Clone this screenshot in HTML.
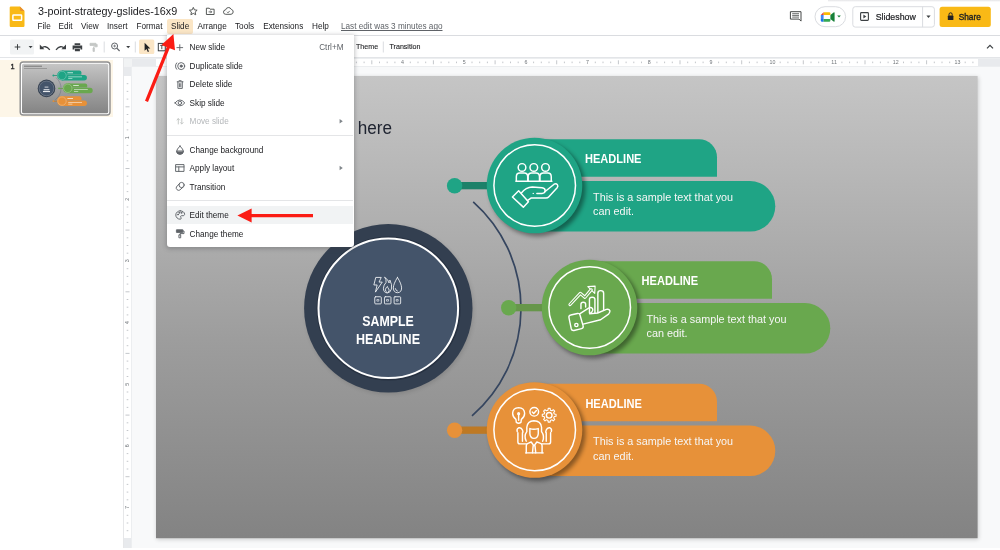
<!DOCTYPE html>
<html lang="en">
<head>
<meta charset="utf-8">
<title>3-point-strategy-gslides-16x9 - Google Slides</title>
<style>
*{box-sizing:border-box;margin:0;padding:0}
html,body{width:1000px;height:550px;overflow:hidden;background:#fff}
body{font-family:"Liberation Sans",sans-serif;color:#202124;position:relative}
#app{position:absolute;left:0;top:0;width:1000px;height:550px;overflow:hidden;will-change:transform}
.abs{position:absolute}
.t{position:absolute;white-space:nowrap;line-height:1}
svg{position:absolute;left:0;top:0;overflow:visible}
svg text{font-family:"Liberation Sans",sans-serif}
#title{left:38px;top:5px;font-size:10.8px;line-height:13px;color:#202124}
.menu{font-size:8.2px;color:#202124;top:22.4px;line-height:10px}
#slidehl{left:167px;top:19px;width:26px;height:15px;background:#fbe6c6;border-radius:2px}
#hdrline{left:0;top:35px;width:1000px;height:1px;background:#dadce0}
#tbline{left:0;top:57px;width:1000px;height:1px;background:#e3e5e8}
.tb{font-size:7.1px;color:#202124;top:43px;line-height:9px;-webkit-text-stroke:.1px #202124}
#dd{left:167px;top:35px;width:186.6px;height:211.6px;background:#fff;border-radius:0 0 3px 3px;box-shadow:0 1px 4px 1px rgba(60,64,67,.3)}
.mi{font-size:8.2px;color:#202124;left:189.6px;line-height:10px}
.mi.dis{color:#b4b7ba}
.sep{left:167px;width:186px;height:1px;background:#e4e5e7}
#canvas{left:123px;top:58px;width:877px;height:492px;background:#f8f9fa}
</style>
</head>
<body>
<div id="app">
<div class="abs" id="canvas"></div>
<svg id="slidesvg" width="1000" height="550" viewBox="0 0 1000 550">
<defs>
<linearGradient id="bg" x1="0" y1="0" x2="0" y2="1">
<stop offset="0" stop-color="#c5c5c5"/><stop offset="0.18" stop-color="#b9b9b9"/><stop offset="0.38" stop-color="#ababab"/><stop offset="0.57" stop-color="#9d9d9d"/><stop offset="0.82" stop-color="#8e8e8e"/><stop offset="1" stop-color="#838383"/>
</linearGradient>
<clipPath id="sc"><rect x="156" y="76" width="822" height="462"/></clipPath>
<filter id="sh" x="-20%" y="-20%" width="150%" height="150%"><feGaussianBlur stdDeviation="2.2"/></filter>
</defs>
<rect x="156.5" y="77" width="822" height="462.5" fill="#000" opacity=".18" filter="url(#sh)"/>
<rect x="156" y="76" width="821.6" height="462.2" fill="url(#bg)"/>
<g clip-path="url(#sc)">
<text x="174" y="107" font-size="20" font-weight="bold" fill="#222" textLength="168" lengthAdjust="spacingAndGlyphs">3 POINT STRATEGY</text>
<text x="172" y="134" font-size="17.5" fill="#1e2330" textLength="220" lengthAdjust="spacingAndGlyphs">Enter your sub headline here</text>
<!-- arc -->
<path d="M473.2,201.8 A142.5,142.5 0 0 1 472,415.8" fill="none" stroke="#35455f" stroke-width="1.7"/>
<!-- big circle -->
<circle cx="389.5" cy="310" r="84" fill="#000" opacity=".12" filter="url(#sh)"/>
<circle cx="388.3" cy="308.3" r="84.2" fill="#333f50"/>
<circle cx="388.6" cy="308.6" r="71.2" fill="none" stroke="#1d2635" stroke-width="1.6" opacity=".55"/>
<circle cx="388.3" cy="308.3" r="69.8" fill="#44546a" stroke="#fff" stroke-width="2"/>
<g transform="translate(368,270) scale(0.07273)" fill="none" stroke="#f1f3f6" stroke-width="12" stroke-linejoin="round" stroke-linecap="round">
<path d="M112,102 H182 L152,166 H196 L102,304 L126,206 H86 Z"/>
<path d="M232,102 Q285,135 288,178 Q306,162 300,138 Q336,200 322,262 Q305,318 262,315 Q212,310 212,250 Q215,205 248,172 Q256,132 232,102 Z"/>
<path d="M262,312 Q236,298 240,266 Q246,240 268,226 Q270,250 286,260 Q300,282 282,302"/>
<path d="M405,102 Q350,190 348,246 Q350,310 405,312 Q462,310 462,246 Q460,190 405,102 Z"/>
<path d="M376,256 Q381,284 405,290"/>
<rect x="93" y="368" width="90" height="98" rx="12"/><rect x="226" y="368" width="90" height="98" rx="12"/><rect x="359" y="368" width="90" height="98" rx="12"/>
<rect x="127" y="406" width="22" height="22" stroke-width="9"/><rect x="260" y="406" width="22" height="22" stroke-width="9"/><rect x="393" y="406" width="22" height="22" stroke-width="9"/>
</g>
<text x="388" y="325.5" font-size="14.5" font-weight="bold" fill="#fff" text-anchor="middle" textLength="51.5" lengthAdjust="spacingAndGlyphs">SAMPLE</text>
<text x="388" y="343.5" font-size="14.5" font-weight="bold" fill="#fff" text-anchor="middle" textLength="64" lengthAdjust="spacingAndGlyphs">HEADLINE</text>
<g transform="translate(0,0)">
<rect x="455" y="182" width="40" height="7.3" fill="#1c8169"/>
<circle cx="454.6" cy="185.8" r="7.7" fill="#1fa485"/>
<path d="M534,139.2 H699 a18,18 0 0 1 18,18 V176.7 H534 Z" fill="#1fa485"/>
<path d="M534,181 H750 a25.3,25.3 0 0 1 0,50.6 H534 Z" fill="#1fa485"/>
<circle cx="537.5" cy="188.5" r="48" fill="#000" opacity=".4" filter="url(#sh)"/>
<circle cx="534.5" cy="185.5" r="47.8" fill="#1fa485"/>
<circle cx="534.7" cy="185.5" r="40.8" fill="none" stroke="#fff" stroke-width="1.5"/>
<g transform="translate(505,155) scale(0.10909)" fill="none" stroke="#fff" stroke-width="13.5" stroke-linecap="round" stroke-linejoin="round">
<circle cx="156" cy="114" r="35"/><circle cx="264" cy="114" r="35"/><circle cx="371" cy="114" r="35"/>
<path d="M104,238 V200 Q104,166 136,166 H176 Q208,166 208,200 V238"/>
<path d="M212,238 V200 Q212,166 244,166 H284 Q316,166 316,200 V238"/>
<path d="M320,238 V200 Q320,166 352,166 H392 Q424,166 424,200 V238"/>
<path d="M100,240 H430"/>
<path d="M68,385 L125,328 L215,428 L168,478 Z"/>
<path d="M150,348 Q190,296 250,293 L340,300 Q370,303 368,328 Q365,352 340,352 L292,352"/>
<path d="M368,335 L450,268 Q468,256 480,272 Q490,286 478,300 L400,385 Q392,395 375,395 L238,395 L205,418"/>
<circle cx="258" cy="352" r="3" fill="#fff" stroke-width="6"/>
</g>
<text x="585" y="163" font-size="12.6" font-weight="bold" fill="#fff" textLength="56.5" lengthAdjust="spacingAndGlyphs">HEADLINE</text>
<text x="593.1" y="200.8" font-size="10.8" fill="#f6f6f6" textLength="140" lengthAdjust="spacingAndGlyphs">This is a sample text that you</text>
<text x="593.1" y="215.4" font-size="10.8" fill="#f6f6f6" textLength="41" lengthAdjust="spacingAndGlyphs">can edit.</text>
</g>
<g transform="translate(55,122)">
<rect x="455" y="182" width="40" height="7.3" fill="#66964a"/>
<circle cx="453.70000000000005" cy="185.8" r="7.7" fill="#69a84e"/>
<path d="M534,139.2 H699 a18,18 0 0 1 18,18 V176.7 H534 Z" fill="#69a84e"/>
<path d="M534,181 H750 a25.3,25.3 0 0 1 0,50.6 H534 Z" fill="#69a84e"/>
<circle cx="537.5" cy="188.5" r="48" fill="#000" opacity=".4" filter="url(#sh)"/>
<circle cx="534.5" cy="185.5" r="47.8" fill="#69a84e"/>
<circle cx="534.7" cy="185.5" r="40.8" fill="none" stroke="#fff" stroke-width="1.5"/>
<g transform="translate(505,155) scale(0.10909)" fill="none" stroke="#fff" stroke-width="13" stroke-linecap="round" stroke-linejoin="round">
<path d="M92,252 L187,150 L228,186 L285,118" stroke-width="30"/>
<path d="M255,88 L322,84 L318,150 Z" stroke-width="10" fill="none"/>
<path d="M92,252 L187,150 L228,186 L285,118" stroke="#69a84e" stroke-width="10"/>
<path d="M192,290 V250 Q192,232 213,232 Q235,232 235,250 V275"/>
<path d="M270,330 V205 Q270,185 295,185 Q320,185 320,205 V330"/>
<path d="M347,325 V148 Q347,125 373,125 Q400,125 400,148 V305"/>
<path d="M82,372 Q78,352 98,348 L160,334 Q178,330 184,350 L212,448 Q217,468 198,473 L128,490 Q108,494 103,474 Z"/>
<circle cx="150" cy="440" r="15"/>
<path d="M180,338 L262,285 Q285,272 298,290 Q308,305 292,320 L272,338 L345,330 L425,297 Q448,290 457,308 Q463,325 445,340 L372,392 L212,432"/>
</g>
<text x="586.6" y="163" font-size="12.6" font-weight="bold" fill="#fff" textLength="56.5" lengthAdjust="spacingAndGlyphs">HEADLINE</text>
<text x="591.5" y="200.8" font-size="10.8" fill="#f6f6f6" textLength="140" lengthAdjust="spacingAndGlyphs">This is a sample text that you</text>
<text x="591.5" y="215.4" font-size="10.8" fill="#f6f6f6" textLength="41" lengthAdjust="spacingAndGlyphs">can edit.</text>
</g>
<g transform="translate(0,244.5)">
<rect x="455" y="182" width="40" height="7.3" fill="#be7924"/>
<circle cx="454.6" cy="185.8" r="7.7" fill="#e79139"/>
<path d="M534,139.2 H699 a18,18 0 0 1 18,18 V176.7 H534 Z" fill="#e79139"/>
<path d="M534,181 H750 a25.3,25.3 0 0 1 0,50.6 H534 Z" fill="#e79139"/>
<circle cx="537.5" cy="188.5" r="48" fill="#000" opacity=".4" filter="url(#sh)"/>
<circle cx="534.5" cy="185.5" r="47.8" fill="#e79139"/>
<circle cx="534.7" cy="185.5" r="40.8" fill="none" stroke="#fff" stroke-width="1.5"/>
<g transform="translate(505,155.5) scale(0.10909)" fill="none" stroke="#fff" stroke-width="13" stroke-linecap="round" stroke-linejoin="round">
<path d="M100,178 Q70,155 70,122 Q72,72 125,70 Q178,72 180,122 Q180,155 150,178 L146,205 Q125,222 104,205 Z"/>
<circle cx="125" cy="125" r="8"/><path d="M125,135 V185"/>
<circle cx="268" cy="108" r="40"/><path d="M250,110 L263,123 L288,96"/>
<circle cx="405" cy="140" r="26"/>
<path d="M452,129 L468,131 L468,149 L452,151 L446,165 L456,178 L443,191 L430,181 L416,187 L414,203 L396,203 L394,187 L380,181 L367,191 L354,178 L364,165 L358,151 L342,149 L342,131 L358,129 L364,115 L354,102 L367,89 L380,99 L394,93 L396,77 L414,77 L416,93 L430,99 L443,89 L456,102 L446,115 Z" stroke-width="10"/>
<path d="M195,378 Q170,330 200,290 V250 Q205,192 265,190 Q330,192 335,250 V290 Q365,330 345,378"/>
<path d="M228,262 Q262,275 305,262 V310 Q300,350 266,352 Q232,350 228,310 Z"/>
<path d="M195,485 V420 Q195,400 215,395 L240,385 L266,420 L292,385 L320,395 Q340,400 340,420 V485"/>
<path d="M190,485 H350"/>
<path d="M258,420 L252,485 M275,420 L282,485"/>
<path d="M195,402 H135 Q118,402 118,385 V300"/>
<path d="M160,378 V300"/>
<path d="M112,290 Q105,262 125,255 Q150,250 160,275 L165,295"/>
<path d="M340,402 H400 Q418,402 418,385 V300"/>
<path d="M378,378 V300"/>
<path d="M425,290 Q432,262 412,255 Q388,250 378,275 L373,295"/>
</g>
<text x="585.4" y="163" font-size="12.6" font-weight="bold" fill="#fff" textLength="56.5" lengthAdjust="spacingAndGlyphs">HEADLINE</text>
<text x="593.1" y="200.8" font-size="10.8" fill="#f6f6f6" textLength="140" lengthAdjust="spacingAndGlyphs">This is a sample text that you</text>
<text x="593.1" y="215.4" font-size="10.8" fill="#f6f6f6" textLength="41" lengthAdjust="spacingAndGlyphs">can edit.</text>
</g>
</g>
</svg>
<svg width="1000" height="550" viewBox="0 0 1000 550">
<rect x="131.5" y="58" width="868.5" height="8.5" fill="#fff"/>
<rect x="131.5" y="58" width="24.5" height="8.5" fill="#e8eaed"/>
<rect x="978" y="58" width="22" height="8.5" fill="#e8eaed"/>
<rect x="123.5" y="58" width="8" height="8.5" fill="#f1f3f4"/>
<path d="M123.5,58.5 H1000 M131.5,66.5 H1000" stroke="#eceef0" stroke-width="1" fill="none"/>
<rect x="123.5" y="66.5" width="8" height="483.5" fill="#fff"/>
<rect x="123.5" y="66.5" width="8" height="9.5" fill="#e8eaed"/>
<rect x="123.5" y="538" width="8" height="12" fill="#e8eaed"/>
<path d="M123.5,58 V550 M131.5,66.5 V550" stroke="#eceef0" stroke-width="1" fill="none"/>
<path d="M163.7,61.6 v1.6 M171.4,61.6 v1.6 M179.1,61.6 v1.6 M186.8,60.3 v4 M194.5,61.6 v1.6 M202.2,61.6 v1.6 M209.9,61.6 v1.6 M225.4,61.6 v1.6 M233.1,61.6 v1.6 M240.8,61.6 v1.6 M248.5,60.3 v4 M256.2,61.6 v1.6 M263.9,61.6 v1.6 M271.6,61.6 v1.6 M287.0,61.6 v1.6 M294.7,61.6 v1.6 M302.4,61.6 v1.6 M310.1,60.3 v4 M317.8,61.6 v1.6 M325.5,61.6 v1.6 M333.2,61.6 v1.6 M348.7,61.6 v1.6 M356.4,61.6 v1.6 M364.1,61.6 v1.6 M371.8,60.3 v4 M379.5,61.6 v1.6 M387.2,61.6 v1.6 M394.9,61.6 v1.6 M410.3,61.6 v1.6 M418.0,61.6 v1.6 M425.7,61.6 v1.6 M433.4,60.3 v4 M441.1,61.6 v1.6 M448.8,61.6 v1.6 M456.5,61.6 v1.6 M472.0,61.6 v1.6 M479.7,61.6 v1.6 M487.4,61.6 v1.6 M495.1,60.3 v4 M502.8,61.6 v1.6 M510.5,61.6 v1.6 M518.2,61.6 v1.6 M533.6,61.6 v1.6 M541.3,61.6 v1.6 M549.0,61.6 v1.6 M556.7,60.3 v4 M564.4,61.6 v1.6 M572.1,61.6 v1.6 M579.8,61.6 v1.6 M595.3,61.6 v1.6 M603.0,61.6 v1.6 M610.7,61.6 v1.6 M618.4,60.3 v4 M626.1,61.6 v1.6 M633.8,61.6 v1.6 M641.5,61.6 v1.6 M656.9,61.6 v1.6 M664.6,61.6 v1.6 M672.3,61.6 v1.6 M680.0,60.3 v4 M687.7,61.6 v1.6 M695.4,61.6 v1.6 M703.1,61.6 v1.6 M718.6,61.6 v1.6 M726.3,61.6 v1.6 M734.0,61.6 v1.6 M741.7,60.3 v4 M749.4,61.6 v1.6 M757.1,61.6 v1.6 M764.8,61.6 v1.6 M780.2,61.6 v1.6 M787.9,61.6 v1.6 M795.6,61.6 v1.6 M803.3,60.3 v4 M811.0,61.6 v1.6 M818.7,61.6 v1.6 M826.4,61.6 v1.6 M841.9,61.6 v1.6 M849.6,61.6 v1.6 M857.3,61.6 v1.6 M865.0,60.3 v4 M872.7,61.6 v1.6 M880.4,61.6 v1.6 M888.1,61.6 v1.6 M903.5,61.6 v1.6 M911.2,61.6 v1.6 M918.9,61.6 v1.6 M926.6,60.3 v4 M934.3,61.6 v1.6 M942.0,61.6 v1.6 M949.7,61.6 v1.6 M965.2,61.6 v1.6 M972.9,61.6 v1.6 M126.7,83.7 h1.6 M126.7,91.4 h1.6 M126.7,99.1 h1.6 M125.5,106.8 h4 M126.7,114.5 h1.6 M126.7,122.2 h1.6 M126.7,129.9 h1.6 M126.7,145.4 h1.6 M126.7,153.1 h1.6 M126.7,160.8 h1.6 M125.5,168.5 h4 M126.7,176.2 h1.6 M126.7,183.9 h1.6 M126.7,191.6 h1.6 M126.7,207.0 h1.6 M126.7,214.7 h1.6 M126.7,222.4 h1.6 M125.5,230.1 h4 M126.7,237.8 h1.6 M126.7,245.5 h1.6 M126.7,253.2 h1.6 M126.7,268.7 h1.6 M126.7,276.4 h1.6 M126.7,284.1 h1.6 M125.5,291.8 h4 M126.7,299.5 h1.6 M126.7,307.2 h1.6 M126.7,314.9 h1.6 M126.7,330.3 h1.6 M126.7,338.0 h1.6 M126.7,345.7 h1.6 M125.5,353.4 h4 M126.7,361.1 h1.6 M126.7,368.8 h1.6 M126.7,376.5 h1.6 M126.7,392.0 h1.6 M126.7,399.7 h1.6 M126.7,407.4 h1.6 M125.5,415.1 h4 M126.7,422.8 h1.6 M126.7,430.5 h1.6 M126.7,438.2 h1.6 M126.7,453.6 h1.6 M126.7,461.3 h1.6 M126.7,469.0 h1.6 M125.5,476.7 h4 M126.7,484.4 h1.6 M126.7,492.1 h1.6 M126.7,499.8 h1.6 M126.7,515.3 h1.6 M126.7,523.0 h1.6 M126.7,530.7 h1.6" stroke="#b5b9be" stroke-width="0.8" fill="none"/>
<g font-size="5.3" fill="#70757a" text-anchor="middle">
<text x="217.7" y="64.4">1</text>
<text x="279.3" y="64.4">2</text>
<text x="340.9" y="64.4">3</text>
<text x="402.6" y="64.4">4</text>
<text x="464.2" y="64.4">5</text>
<text x="525.9" y="64.4">6</text>
<text x="587.5" y="64.4">7</text>
<text x="649.2" y="64.4">8</text>
<text x="710.9" y="64.4">9</text>
<text x="772.5" y="64.4">10</text>
<text x="834.1" y="64.4">11</text>
<text x="895.8" y="64.4">12</text>
<text x="957.4" y="64.4">13</text>
<text transform="translate(129.4,137.7) rotate(-90)">1</text>
<text transform="translate(129.4,199.3) rotate(-90)">2</text>
<text transform="translate(129.4,260.9) rotate(-90)">3</text>
<text transform="translate(129.4,322.6) rotate(-90)">4</text>
<text transform="translate(129.4,384.2) rotate(-90)">5</text>
<text transform="translate(129.4,445.9) rotate(-90)">6</text>
<text transform="translate(129.4,507.6) rotate(-90)">7</text>
</g></svg>
<!-- thumbnail panel -->
<div class="abs" style="left:0;top:58px;width:123px;height:492px;background:#fff"></div>
<div class="abs" style="left:123px;top:58px;width:1px;height:492px;background:#e6e7e9"></div>
<div class="abs" style="left:0;top:59.5px;width:112.5px;height:57.5px;background:#fdf6e8"></div>
<div class="t" style="left:10.6px;top:62.6px;font-size:7.4px;color:#202124;-webkit-text-stroke:.3px #202124;line-height:8px">1</div>
<svg width="1000" height="550" viewBox="0 0 1000 550">
<defs><linearGradient id="tg" x1="0" y1="0" x2="0" y2="1"><stop offset="0" stop-color="#c5c5c5"/><stop offset="0.5" stop-color="#a2a2a2"/><stop offset="1" stop-color="#848484"/></linearGradient></defs>
<rect x="20.2" y="62" width="89.8" height="53" rx="3" fill="#fff" stroke="#8e8e8e" stroke-width="1.4"/>
<rect x="22" y="63.8" width="86.2" height="49.4" rx="1.5" fill="url(#tg)"/>
<g id="thumbshapes">
<rect x="24" y="65.7" width="18" height="1" fill="#555" opacity=".7"/><rect x="24" y="68.2" width="23" height=".7" fill="#666" opacity=".6"/>
<path d="M56,77.6 A14,14 0 0 1 55.3,99.7" fill="none" stroke="#5a6577" stroke-width=".4"/>
<circle cx="46.5" cy="88.4" r="8.8" fill="#333f50"/><circle cx="46.5" cy="88.4" r="7.4" fill="#44546a" stroke="#cfd3da" stroke-width=".3"/>
<rect x="44.6" y="86.6" width="3.8" height="1" fill="#cfd3da"/><rect x="43.6" y="89.2" width="5.8" height="1.1" fill="#e8eaee"/><rect x="43" y="91" width="7" height="1.1" fill="#e8eaee"/>
<g fill="#1fa485"><rect x="52.8" y="75.2" width="5" height=".7" fill="#1c8169"/><circle cx="53.4" cy="75.5" r=".9"/><path d="M62,70.6 h17.4 a2,2 0 0 1 2,2 v2.1 h-19.4z"/><path d="M62,75 h22.2 a2.7,2.7 0 0 1 0,5.4 h-22.2z"/><circle cx="62" cy="75.5" r="5"/></g>
<g fill="#69a84e"><rect x="58.6" y="88" width="5" height=".7" fill="#66964a"/><circle cx="59.1" cy="88.3" r=".9"/><path d="M67.8,83.4 h17.4 a2,2 0 0 1 2,2 v2.1 h-19.4z"/><path d="M67.8,87.8 h22.2 a2.7,2.7 0 0 1 0,5.4 h-22.2z"/><circle cx="67.8" cy="88.3" r="5"/></g>
<g fill="#e79139"><rect x="52.8" y="100.8" width="5" height=".7" fill="#be7924"/><circle cx="53.4" cy="101.1" r=".9"/><path d="M62,96.2 h17.4 a2,2 0 0 1 2,2 v2.1 h-19.4z"/><path d="M62,100.6 h22.2 a2.7,2.7 0 0 1 0,5.4 h-22.2z"/><circle cx="62" cy="101.1" r="5"/></g>
<g fill="none" stroke="#fff" stroke-width=".3" opacity=".85"><circle cx="62" cy="75.5" r="4.2"/><circle cx="67.8" cy="88.3" r="4.2"/><circle cx="62" cy="101.1" r="4.2"/></g>
<g fill="#fff" opacity=".85"><rect x="67.4" y="72.4" width="5.6" height=".8"/><rect x="68.2" y="76.6" width="13.8" height=".6"/><rect x="68.2" y="78.2" width="4.2" height=".6"/>
<rect x="73.2" y="85.2" width="5.6" height=".8"/><rect x="74" y="89.4" width="13.8" height=".6"/><rect x="74" y="91" width="4.2" height=".6"/>
<rect x="67.4" y="98" width="5.6" height=".8"/><rect x="68.2" y="102.2" width="13.8" height=".6"/><rect x="68.2" y="103.8" width="4.2" height=".6"/></g>
</g>
</svg>

<div class="abs" style="left:123px;top:548px;width:877px;height:2px;background:#fff"></div>
<!-- header -->
<div class="abs" style="left:0;top:0;width:1000px;height:35px;background:#fff"></div>
<div class="abs" style="left:0;top:36px;width:1000px;height:21px;background:#fff"></div>
<div class="abs" style="left:828px;top:0;width:172px;height:2px;background:linear-gradient(#e4e4e6,#fff)"></div>
<svg width="1000" height="60" viewBox="0 0 1000 60">
<!-- slides logo -->
<path d="M10.900,6.400 H19.900 L24.500,11 V25.800 a1.200,1.200 0 0 1 -1.200,1.200 H10.900 a1.200,1.200 0 0 1 -1.200,-1.200 V7.600 a1.200,1.200 0 0 1 1.200,-1.200z" fill="#f9b916"/>
<path d="M19.900,6.400 L24.500,11 H21.100 a1.200,1.200 0 0 1 -1.200,-1.200z" fill="#e8912d"/>
<rect x="12.900" y="14.900" width="8.700" height="5.400" rx=".6" fill="none" stroke="#fff" stroke-width="1.500"/>
<!-- star -->
<path d="M193.3,7.4 l1.15,2.5 2.7,.3 -2,1.85 .55,2.7 -2.4,-1.35 -2.4,1.35 .55,-2.7 -2,-1.85 2.7,-.3z" fill="none" stroke="#444746" stroke-width=".9" stroke-linejoin="round"/>
<!-- move folder -->
<path d="M206.4,8.2 h2.8 l.9,1 h4 v5.3 h-7.7z" fill="none" stroke="#444746" stroke-width=".9" stroke-linejoin="round"/>
<path d="M208.6,11.9 h3 m-1.2,-1.3 l1.3,1.3 -1.3,1.3" fill="none" stroke="#444746" stroke-width=".8"/>
<!-- cloud -->
<path d="M225.8,14.3 a2.2,2.2 0 0 1 -.2,-4.4 a3,3 0 0 1 5.7,-.5 a2.5,2.5 0 0 1 -.3,4.9z" fill="none" stroke="#444746" stroke-width=".9" stroke-linejoin="round"/>
<path d="M227,11.8 l1,1 1.7,-1.9" fill="none" stroke="#444746" stroke-width=".8"/>
<!-- comment icon -->
<path d="M790.4,11.7 h10.6 v9.4 l-2,-2 h-8.6z" fill="none" stroke="#444746" stroke-width="1" stroke-linejoin="round"/>
<path d="M792.2,13.7 h6.8 M792.2,15.4 h6.8 M792.2,17.1 h6.8" stroke="#444746" stroke-width=".8"/>
<!-- meet pill -->
<rect x="815" y="6.7" width="30.6" height="20" rx="10" fill="#fff" stroke="#dadce0" stroke-width="1"/>
<rect x="820.8" y="12.2" width="9.6" height="9.6" rx="1" fill="#fff"/>
<path d="M823.6,12.2 h5.6 a1.2,1.2 0 0 1 1.2,1.2 v1.6 h-6.8z" fill="#fbbc04"/>
<path d="M820.8,15 l2.8,-2.8 v2.8z" fill="#ea4335"/>
<path d="M820.8,15 h2.8 v4 h-2.8z" fill="#4285f4"/>
<path d="M820.8,19 h2.8 v2.8 h-1.6 a1.2,1.2 0 0 1 -1.2,-1.2z" fill="#1a73e8"/>
<path d="M823.6,19 h6.8 v1.6 a1.2,1.2 0 0 1 -1.2,1.2 h-5.6z" fill="#34a853"/>
<path d="M830.4,15 l3.2,-2.6 a.6,.6 0 0 1 1,.4 v8.4 a.6,.6 0 0 1 -1,.4 l-3.2,-2.6z" fill="#188038"/>
<path d="M837.2,15.6 h3.6 l-1.8,2z" fill="#188038"/>
<!-- slideshow -->
<rect x="852.8" y="6.7" width="81.6" height="20.4" rx="2.5" fill="#fff" stroke="#dadce0" stroke-width="1"/>
<path d="M922.6,6.7 v20.4" stroke="#dadce0" stroke-width="1"/>
<rect x="860.6" y="12.6" width="7.8" height="7.8" rx=".8" fill="none" stroke="#3c4043" stroke-width="1.1"/>
<path d="M863.4,14.6 v3.8 l2.9,-1.9z" fill="#3c4043"/>
<path d="M926.4,15.6 h4.2 l-2.1,2.3z" fill="#3c4043"/>
<!-- share -->
<rect x="939.6" y="6.7" width="51.2" height="20.2" rx="2.5" fill="#f9b916"/>
<rect x="947.8" y="15.6" width="5.6" height="4.4" rx=".6" fill="#202124"/>
<path d="M949,15.6 v-1.2 a1.6,1.6 0 0 1 3.2,0 v1.2" fill="none" stroke="#202124" stroke-width="1"/>
<!-- toolbar icons -->
<rect x="10" y="39.4" width="24" height="15.2" rx="1.5" fill="#f1f3f4"/>
<path d="M17.5,44.2 v5.6 M14.7,47 h5.6" stroke="#3c4043" stroke-width="1"/>
<path d="M28.6,46 h4 l-2,2.300z" fill="#3c4043"/>
<path d="M41.200,48.400 q4,-4 8.600,1.400" fill="none" stroke="#3c4043" stroke-width="1.300"/><path d="M39.800,44.600 v4.600 h4.600z" fill="#3c4043"/>
<path d="M64.600,48.400 q-4,-4 -8.600,1.400" fill="none" stroke="#3c4043" stroke-width="1.300"/><path d="M66,44.600 v4.600 h-4.600z" fill="#3c4043"/>
<path d="M74.6,43.2 h5.600 v1.800 h-5.600z M72.600,45.600 h9.600 v4 h-1.800 v-1.600 h-6 v1.600 h-1.800z M74.900,48.600 h5 v2.600 h-5z" fill="#3c4043"/>
<path d="M90,43.300 h6 v2.200 h-6z M96,44.400 h1.200 v2.400 h-3.600 v1.200 M93,48 h1.400 v3.400 h-1.400z" fill="#c4c7c5" stroke="#c4c7c5" stroke-width=".8"/>
<path d="M104.200,41.500 v11" stroke="#dadce0" stroke-width="1"/>
<circle cx="114.600" cy="46" r="3" fill="none" stroke="#5f6368" stroke-width="1"/><path d="M116.800,48.200 l2.800,2.800" stroke="#5f6368" stroke-width="1.200"/><path d="M113.200,46 h2.800 M114.600,44.600 v2.800" stroke="#5f6368" stroke-width=".7"/>
<path d="M126.200,46 h4 l-2,2.300z" fill="#3c4043"/>
<path d="M135.300,41.500 v11" stroke="#dadce0" stroke-width="1"/>
<rect x="139" y="39.500" width="15.300" height="14.600" rx="1.500" fill="#fbe6c6"/>
<path d="M144.600,42.800 v8 l1.900,-1.800 1.300,2.900 1.200,-.5 -1.300,-2.800 h2.600z" fill="#202124"/>
<rect x="158.300" y="43.400" width="7" height="7.400" fill="none" stroke="#3c4043" stroke-width="1"/>
<path d="M160.200,45.400 h3.200 M161.800,45.400 v3.800" stroke="#3c4043" stroke-width=".9"/>
<path d="M383.300,41.500 v11" stroke="#dadce0" stroke-width="1"/>
<path d="M987,48.400 l3,-3 3,3" fill="none" stroke="#3c4043" stroke-width="1.200"/>
</svg>
<div class="t" id="title">3-point-strategy-gslides-16x9</div>
<div class="abs" id="slidehl"></div>
<div class="t menu" style="left:37.5px">File</div>
<div class="t menu" style="left:58.5px">Edit</div>
<div class="t menu" style="left:81px">View</div>
<div class="t menu" style="left:107px">Insert</div>
<div class="t menu" style="left:136.5px">Format</div>
<div class="t menu" style="left:171px">Slide</div>
<div class="t menu" style="left:197.6px">Arrange</div>
<div class="t menu" style="left:235px">Tools</div>
<div class="t menu" style="left:263.2px">Extensions</div>
<div class="t menu" style="left:312px">Help</div>
<div class="t menu" style="left:341px;color:#5f6368;text-decoration:underline">Last edit was 3 minutes ago</div>
<div class="t" style="left:875.7px;top:11.5px;font-size:8.8px;line-height:10px;color:#202124;-webkit-text-stroke:.2px #202124">Slideshow</div>
<div class="t" style="left:958.7px;top:11.8px;font-size:8.3px;line-height:10px;color:#202124;-webkit-text-stroke:.35px #202124">Share</div>
<div class="abs" id="hdrline"></div>
<div class="abs" id="tbline"></div>
<div class="t tb" style="left:356px">Theme</div>
<div class="t tb" style="left:389.5px">Transition</div>
<!-- dropdown -->
<div class="abs" id="dd"></div>
<div class="t mi" style="top:43.0px">New slide</div>
<div class="t mi" style="top:61.6px">Duplicate slide</div>
<div class="t mi" style="top:80.1px">Delete slide</div>
<div class="t mi" style="top:98.7px">Skip slide</div>
<div class="t mi dis" style="top:117.2px">Move slide</div>
<div class="abs sep" style="top:135px"></div>
<div class="t mi" style="top:145.6px">Change background</div>
<div class="t mi" style="top:164.1px">Apply layout</div>
<div class="t mi" style="top:182.6px">Transition</div>
<div class="abs sep" style="top:200px"></div>
<div class="abs" style="left:167px;top:205.6px;width:186px;height:18.6px;background:#f1f3f4"></div>
<div class="t mi" style="top:211.0px">Edit theme</div>
<div class="t mi" style="top:229.5px">Change theme</div>
<div class="t mi" style="left:319.2px;top:43px;color:#5f6368">Ctrl+M</div>
<svg width="1000" height="550" viewBox="0 0 1000 550">
<g fill="none" stroke="#5f6368" stroke-width=".95" stroke-linecap="round" stroke-linejoin="round">
<!-- plus -->
<path d="M179.800,44.700 v5.800 M176.900,47.600 h5.800" stroke-width=".9"/>
<!-- duplicate -->
<circle cx="181.200" cy="66.100" r="3.500"/><circle cx="181.200" cy="66.100" r="1.100" fill="#5f6368"/><path d="M176.700,62.900 a4.600,4.600 0 0 0 0,6.400"/>
<!-- delete -->
<path d="M177.200,81.800 h5.800 M177.900,81.800 v6.600 h4.400 v-6.600 M179.100,80.700 h2 M179.400,83.600 v3.200 M180.800,83.600 v3.200"/>
<!-- skip (eye) -->
<path d="M175,102.900 q4.900,-6 9.800,0 q-4.900,6 -9.800,0z"/><circle cx="179.900" cy="102.900" r="1.700"/>
<!-- move -->
<path d="M178.300,124 v-5.400 l-1.300,1.400 M178.300,118.600 l1.300,1.400 M181.800,118.600 v5.400 l-1.300,-1.400 M181.800,124 l1.300,-1.400" stroke="#c4c7c5"/>
<!-- change background -->
<path d="M180,146 q-3.400,3.600 -3.400,5.200 a3.400,3 0 0 0 6.800,0 q0,-1.600 -3.400,-5.200z"/><path d="M176.700,151.400 a3.300,2.800 0 0 0 6.600,0z" fill="#5f6368"/>
<!-- apply layout -->
<rect x="176" y="164.600" width="8" height="6.800"/><path d="M176,166.900 h8 M178.800,166.900 v4.500"/>
<!-- transition -->
<circle cx="181.600" cy="185" r="2.600"/><path d="M179.400,183.600 l-3,3.400 a2.400,2.400 0 0 0 3.400,3 l3.400,-3"/>
<!-- edit theme (palette) -->
<path d="M180.200,210.800 a4.400,4.200 0 1 0 0,8.400 c1.400,0 1,-1.500 .5,-2 c-.5,-.7 0,-1.500 1,-1.500 h1.300 c1,0 1.600,-.7 1.600,-1.500 c0,-1.900 -2,-3.400 -4.400,-3.400z"/>
<circle cx="178" cy="214.600" r=".5"/><circle cx="179.200" cy="212.800" r=".5"/><circle cx="181.400" cy="212.800" r=".5"/>
<!-- change theme (roller) -->
<path d="M176.800,229.800 h6 v2.600 h-6z" fill="#5f6368"/><path d="M182.800,231 h1.200 v2.600 h-4 v1.200 M179.300,234.800 h1.400 v3 h-1.400z"/>
</g>
<path d="M339.600,119 l3.200,2.200 -3.200,2.200z M339.600,165.800 l3.200,2.200 -3.200,2.200z" fill="#80868b"/>
<!-- red arrows -->
<g fill="#fb1c14" stroke="none">
<path d="M313,214 v3.200 h-62 v-3.200z"/><path d="M237.400,215.600 l14.200,-7 v14z"/>
<path d="M173.400,33.900 L175,50.300 L169.700,48.200 L148,102 L145,100.800 L166.700,47 L161.400,44.900z"/>
</g>
</svg>
</div>
</body>
</html>
